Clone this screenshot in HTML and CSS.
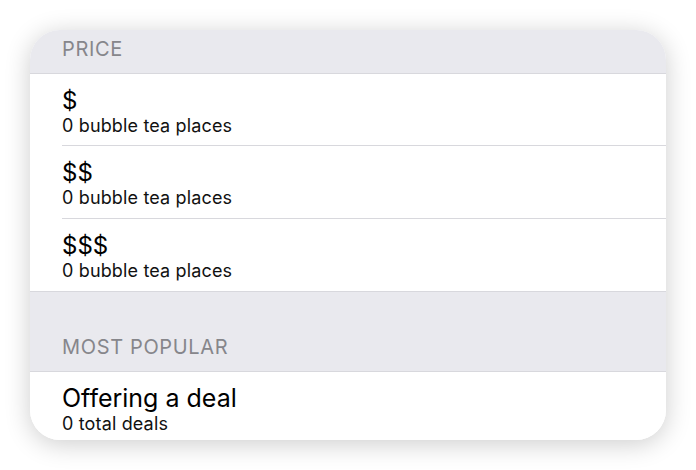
FILE: index.html
```html
<!DOCTYPE html>
<html>
<head>
<meta charset="utf-8">
<link rel="stylesheet" href="styles.css">
</head>
<body>
<div class="card">
  <div class="section-header"><span class="header-text">PRICE</span></div>
  <div class="list">
    <div class="row">
      <div class="title">$</div>
      <div class="subtitle">0 bubble tea places</div>
    </div>
    <div class="row">
      <div class="title">$$</div>
      <div class="subtitle">0 bubble tea places</div>
    </div>
    <div class="row">
      <div class="title">$$$</div>
      <div class="subtitle">0 bubble tea places</div>
    </div>
  </div>
  <div class="section-header tall"><span class="header-text">MOST POPULAR</span></div>
  <div class="list last">
    <div class="row big">
      <div class="title">Offering a deal</div>
      <div class="subtitle">0 total deals</div>
    </div>
  </div>
</div>
</body>
</html>
```
FILE: styles.css
```css
html, body {
  margin: 0;
  padding: 0;
  background: #ffffff;
}
body {
  padding: 30px;
  font-family: Inter, "Liberation Sans", sans-serif;
  color: #000;
}
.card {
  width: 636px;
  height: 410px;
  border-radius: 30px;
  overflow: hidden;
  background: #ffffff;
  box-shadow: 0 4px 26px rgba(0, 0, 0, 0.2);
  display: flex;
  flex-direction: column;
}
.card > * {
  flex-shrink: 0;
}
.section-header {
  background: #e9e9ee;
  border-bottom: 1px solid #d8d8dd;
  display: flex;
  align-items: flex-end;
  padding-left: 32px;
  padding-bottom: 14px;
  box-sizing: border-box;
  height: 44px;
}
.section-header.tall {
  height: 80px;
  padding-bottom: 14px;
}
.header-text {
  font-size: 20px;
  line-height: 20px;
  color: #86868b;
  letter-spacing: 0.65px;
}
.list {
  border-bottom: 1px solid #d8d8dd;
  background: #fff;
}
.list.last {
  border-bottom: none;
}
.row {
  margin-left: 32px;
  height: 72.33px;
  box-sizing: border-box;
  border-bottom: 1px solid #d8d8dd;
  display: flex;
  flex-direction: column;
  padding-top: 13px;
}
.row:last-child {
  border-bottom: none;
}
.title {
  font-size: 24px;
  line-height: 28px;
}
.subtitle {
  font-size: 18px;
  line-height: 22px;
  letter-spacing: 0.15px;
  color: #111;
}
.row.big {
  padding-top: 11px;
}
.row.big .title {
  font-size: 25px;
  line-height: 30px;
}
```
